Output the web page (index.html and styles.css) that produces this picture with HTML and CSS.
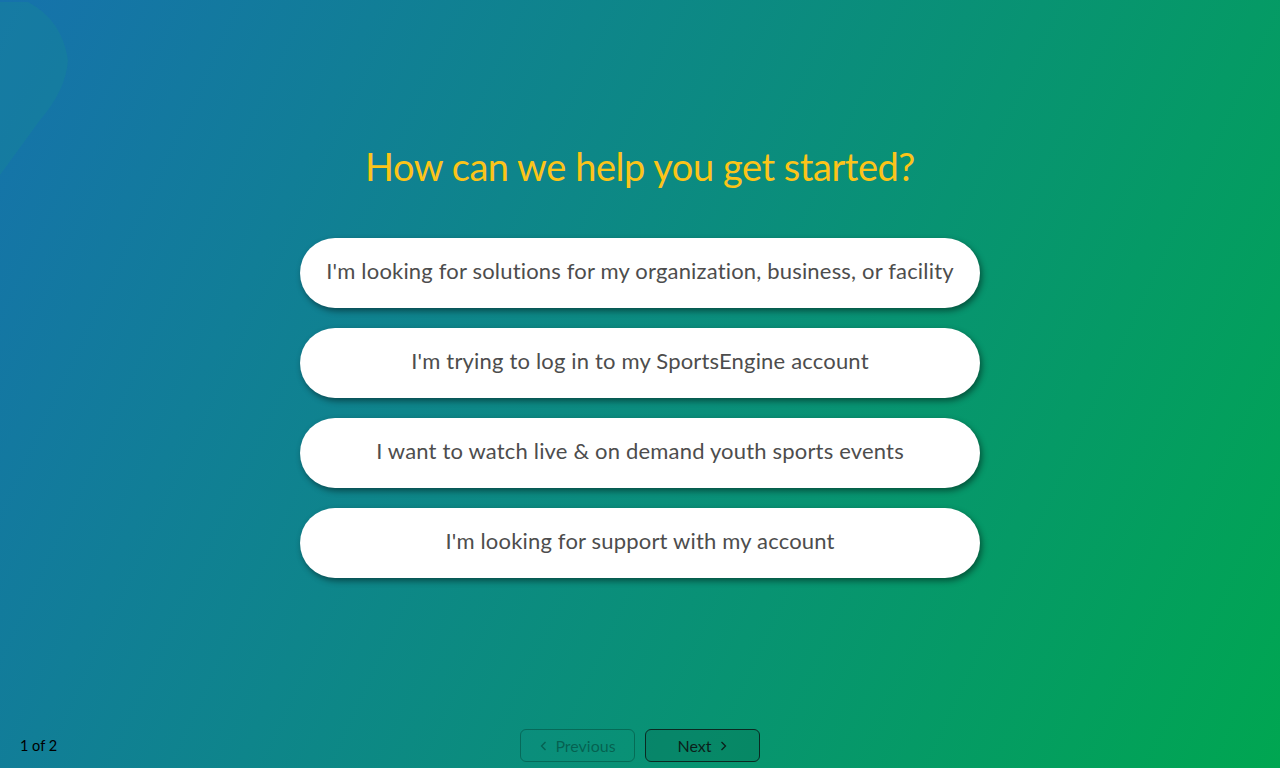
FILE: index.html
```html
<!DOCTYPE html>
<html lang="en">
<head>
<meta charset="utf-8">
<title>How can we help you get started?</title>
<link rel="stylesheet" href="styles.css">
</head>
<body>
<div class="page">
  <svg class="deco" width="80" height="180" viewBox="0 0 80 180" aria-hidden="true">
    <path d="M0 2 L28 2 Q62 20 68 60 Q66 90 40 120 L0 175 Z" fill="#17869a" opacity="0.45"/>
  </svg>
  <main class="content">
    <h1 class="title">How can we help you get started?</h1>
    <div class="options">
      <button class="option">I'm looking for solutions for my organization, business, or facility</button>
      <button class="option">I'm trying to log in to my SportsEngine account</button>
      <button class="option">I want to watch live &amp; on demand youth sports events</button>
      <button class="option">I'm looking for support with my account</button>
    </div>
  </main>
  <footer class="footer">
    <div class="counter">1 of 2</div>
    <div class="nav">
      <button class="nav-btn prev">
        <svg class="chev" width="10" height="12" viewBox="0 0 10 12"><path d="M6.5 2 L2.5 6 L6.5 10" fill="none" stroke="currentColor" stroke-width="1.3"/></svg>
        <span>Previous</span>
      </button>
      <button class="nav-btn next">
        <span>Next</span>
        <svg class="chev" width="10" height="12" viewBox="0 0 10 12"><path d="M3.5 2 L7.5 6 L3.5 10" fill="none" stroke="currentColor" stroke-width="1.3"/></svg>
      </button>
    </div>
    <div class="spacer"></div>
  </footer>
</div>
</body>
</html>
```

FILE: styles.css
```css
* { box-sizing: border-box; }
html, body { margin: 0; padding: 0; }
body {
  font-family: "Lato", "Noto Sans", sans-serif;
  background: linear-gradient(115deg, #1672ac 0%, #00a651 100%);
  min-height: 100vh;
  overflow: hidden;
}
.page {
  position: relative;
  height: 100vh;
  display: flex;
  flex-direction: column;
}
.deco {
  position: absolute;
  left: 0;
  top: 0;
}
.content {
  display: flex;
  flex-direction: column;
  align-items: center;
  padding-top: 143px;
}
.title {
  margin: 0 0 49px;
  font-size: 38px;
  line-height: 46px;
  font-weight: 400;
  color: #fcc419;
  letter-spacing: -0.45px;
}
.options {
  display: flex;
  flex-direction: column;
  gap: 20px;
  width: 680px;
}
.option {
  height: 70px;
  border: none;
  border-radius: 35px;
  background: #ffffff;
  box-shadow: 2px 3px 6px rgba(0, 0, 0, 0.45);
  font-family: inherit;
  font-size: 22px;
  font-weight: 400;
  letter-spacing: 0.18px;
  color: #4d4d4d;
  padding: 0 20px 6px;
  cursor: pointer;
}
.footer {
  margin-top: auto;
  display: grid;
  grid-template-columns: 1fr auto 1fr;
  align-items: center;
  padding: 0 20px 6px;
}
.counter {
  font-size: 14.5px;
  color: #000;
}
.nav {
  display: flex;
  gap: 10px;
}
.nav-btn {
  width: 115px;
  height: 33px;
  border-radius: 6px;
  display: flex;
  align-items: center;
  justify-content: center;
  gap: 6px;
  font-family: inherit;
  font-size: 16px;
  background: transparent;
  padding: 0;
}
.prev {
  border: 1px solid rgba(0, 40, 30, 0.35);
  color: rgba(0, 40, 30, 0.45);
}
.next {
  border: 1px solid #0a2a22;
  background: rgba(0, 50, 30, 0.12);
  color: #0b1f1a;
}
.chev { display: block; }
```
